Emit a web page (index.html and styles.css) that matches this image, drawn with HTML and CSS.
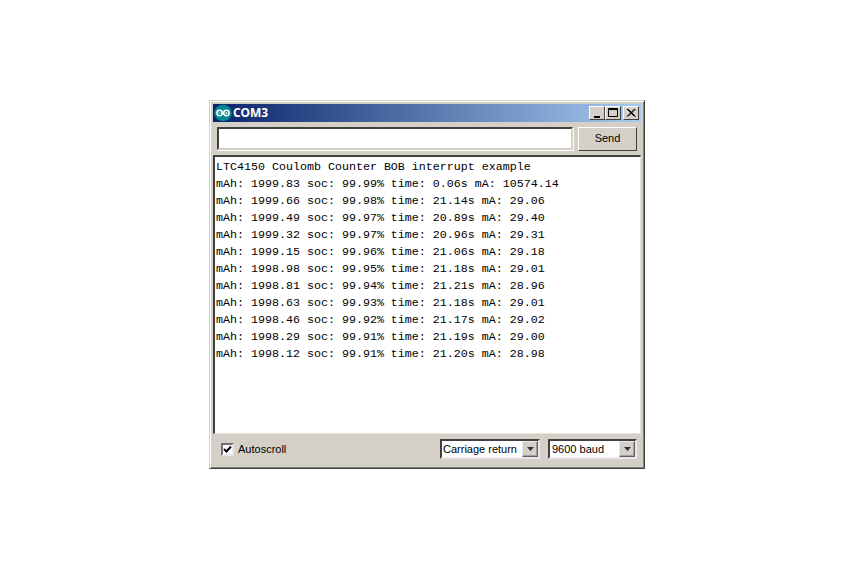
FILE: index.html
```html
<!DOCTYPE html>
<html lang="en">
<head>
<meta charset="utf-8">
<title>COM3</title>
<link rel="stylesheet" href="styles.css">
</head>
<body>
<div class="window">
  <div class="titlebar">
    <svg class="app-icon" width="18" height="18" viewBox="0 0 18 18">
      <ellipse cx="9" cy="9" rx="8.800" ry="8.200" fill="#00878f"/>
      <circle cx="5.600" cy="9" r="2.700" fill="none" stroke="#fff" stroke-width="1.500"/>
      <circle cx="12.400" cy="9" r="2.700" fill="none" stroke="#fff" stroke-width="1.500"/>
      <path d="M4.500 9h2.200M11.300 9h2.200M12.400 7.900v2.200" stroke="#fff" stroke-width="0.800"/>
    </svg>
    <span class="title">COM3</span>
    <div class="caption-buttons">
      <div class="caption-btn"><svg width="14" height="12" viewBox="0 0 14 12"><path d="M4 9h6v2H4z" fill="#000"/></svg></div>
      <div class="caption-btn"><svg width="14" height="12" viewBox="0 0 14 12"><path d="M2.500 1.500h9v8h-9zM2.500 2.500h9" fill="none" stroke="#000"/></svg></div>
      <div class="caption-btn caption-close"><svg width="14" height="12" viewBox="0 0 14 12"><path d="M3 2l7.500 7.500M4 2l7.500 7.500M10.500 2L3 9.500M11.500 2L4 9.500" stroke="#000" stroke-width="1"/></svg></div>
    </div>
  </div>
  <div class="send-row">
    <div class="text-input"></div>
    <div class="send-btn">Send</div>
  </div>
  <div class="console">
    <div class="line">LTC4150 Coulomb Counter BOB interrupt example</div>
    <div class="line">mAh: 1999.83 soc: 99.99% time: 0.06s mA: 10574.14</div>
    <div class="line">mAh: 1999.66 soc: 99.98% time: 21.14s mA: 29.06</div>
    <div class="line">mAh: 1999.49 soc: 99.97% time: 20.89s mA: 29.40</div>
    <div class="line">mAh: 1999.32 soc: 99.97% time: 20.96s mA: 29.31</div>
    <div class="line">mAh: 1999.15 soc: 99.96% time: 21.06s mA: 29.18</div>
    <div class="line">mAh: 1998.98 soc: 99.95% time: 21.18s mA: 29.01</div>
    <div class="line">mAh: 1998.81 soc: 99.94% time: 21.21s mA: 28.96</div>
    <div class="line">mAh: 1998.63 soc: 99.93% time: 21.18s mA: 29.01</div>
    <div class="line">mAh: 1998.46 soc: 99.92% time: 21.17s mA: 29.02</div>
    <div class="line">mAh: 1998.29 soc: 99.91% time: 21.19s mA: 29.00</div>
    <div class="line">mAh: 1998.12 soc: 99.91% time: 21.20s mA: 28.98</div>
  </div>
  <div class="footer">
    <div class="checkbox"><svg width="9" height="9" viewBox="0 0 9 9"><path d="M1 4l2.500 2.500L8 1.500" fill="none" stroke="#000" stroke-width="2"/></svg></div>
    <span class="label">Autoscroll</span>
    <div class="select select-line"><span class="select-text">Carriage return</span><div class="arrow"><svg width="7" height="4" viewBox="0 0 7 4"><path d="M0 0h7L3.500 4z" fill="#303030"/></svg></div></div>
    <div class="select select-baud"><span class="select-text">9600 baud</span><div class="arrow"><svg width="7" height="4" viewBox="0 0 7 4"><path d="M0 0h7L3.500 4z" fill="#303030"/></svg></div></div>
  </div>
</div>
</body>
</html>
```
FILE: styles.css
```css
* { box-sizing: border-box; }
html, body { margin: 0; background: #fff; }
body { padding: 100px 0 0 209px; font-family: "Liberation Sans", sans-serif; }

.window {
  width: 436px;
  height: 369px;
  background: #d4d0c8;
  border: 1px solid;
  border-color: #d4d0c8 #404040 #404040 #d4d0c8;
  box-shadow: inset 1px 1px 0 #fff, inset -1px -1px 0 #808080;
  padding: 3px;
  display: flex;
  flex-direction: column;
}

.titlebar {
  height: 18px;
  flex: none;
  background: linear-gradient(to right, #0a246a, #a6caf0);
  display: flex;
  align-items: center;
  padding: 0 2px 0 1px;
  color: #fff;
}
.app-icon { flex: none; }
.title { font: bold 12px/18px "Noto Sans", sans-serif; margin-left: 1px; }
.caption-buttons { margin-left: auto; display: flex; }
.caption-btn {
  width: 16px;
  height: 14px;
  background: #d4d0c8;
  border: 1px solid;
  border-color: #fff #404040 #404040 #fff;
  display: flex;
  align-items: center;
  justify-content: center;
}
.caption-close { margin-left: 2px; }

.send-row {
  height: 33px;
  flex: none;
  display: flex;
  padding: 5px 4px 0 4px;
  gap: 5px;
}
.text-input {
  width: 356px;
  height: 23px;
  background: #fff;
  border: 2px solid;
  border-color: #404040 #d4d0c8 #d4d0c8 #404040;
  box-shadow: 1px 1px 0 #fff;
}
.send-btn {
  width: 59px;
  height: 24px;
  background: #d4d0c8;
  border: 1px solid;
  border-color: #fff #404040 #404040 #fff;
  font-size: 11px;
  line-height: 21px;
  text-align: center;
  color: #000;
}

.console {
  height: 279px;
  flex: none;
  background: #fff;
  border-style: solid;
  border-width: 2px 1px 1px 2px;
  border-color: #404040 #e6e3dc #e6e3dc #404040;
  padding: 2px 0 0 1px;
  font: 11.67px/17px "Liberation Mono", monospace;
  color: #000;
}
.line { white-space: pre; }

.footer {
  flex: 1;
  display: flex;
  align-items: center;
  padding: 0 4px 1px 8px;
  font-size: 11px;
  color: #000;
}
.checkbox {
  width: 13px;
  height: 13px;
  background: #fff;
  border: 2px solid;
  border-color: #707070 #e8e8e8 #e8e8e8 #707070;
  display: flex;
  align-items: center;
  justify-content: center;
  flex: none;
}
.label { margin-left: 4px; }
.select {
  height: 20px;
  background: #fff;
  border: 2px solid;
  border-color: #404040 #e8e8e8 #e8e8e8 #404040;
  display: flex;
  align-items: center;
  justify-content: space-between;
  padding-left: 1px;
}
.select-text { white-space: nowrap; }
.select-line { width: 100px; margin-left: auto; }
.select-baud { width: 89px; margin-left: 8px; padding-left: 2px; }
.arrow {
  width: 16px;
  height: 16px;
  background: #d4d0c8;
  border: 1px solid;
  border-color: #e8e8e8 #606060 #606060 #e8e8e8;
  box-shadow: inset -1px -1px 0 #a0a0a0;
  display: flex;
  align-items: center;
  justify-content: center;
}
```
